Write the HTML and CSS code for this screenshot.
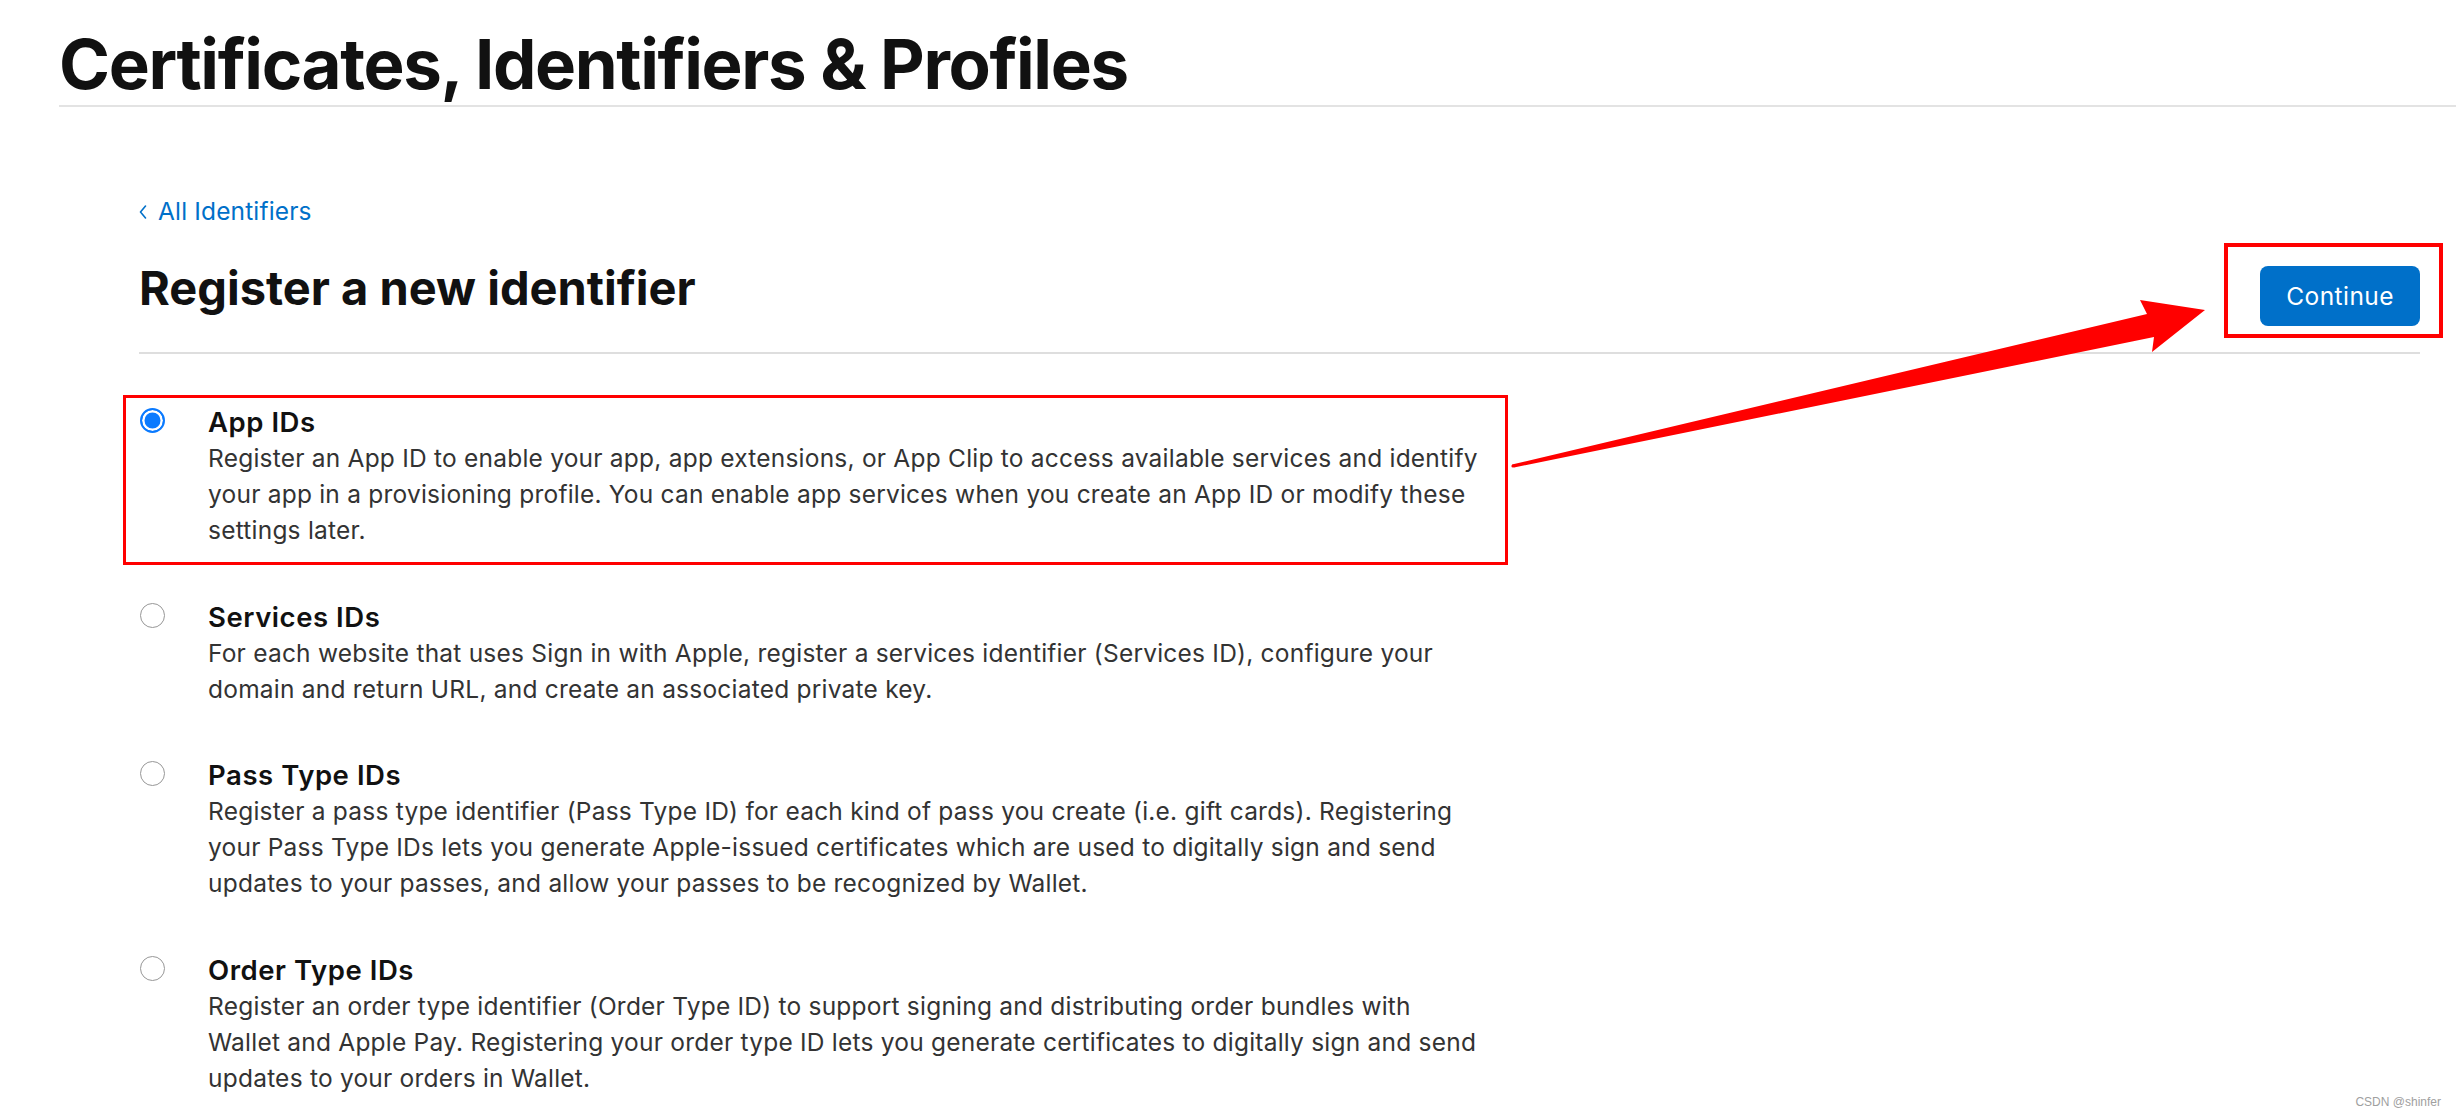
FILE: index.html
```html
<html lang="en">
  <head>
    <meta charset="UTF-8" />
    <meta name="viewport" content="width=device-width, initial-scale=1.0" />
    <title>Register a new identifier</title>
    <link rel="stylesheet" href="styles.css">
  </head>
  <body>
    <header class="top">
      <h1 class="top-title">Certificates, Identifiers &amp; Profiles</h1>
    </header>

    <main class="page">
      <a class="back" href="#">
        <svg class="back-icon" width="8" height="14" viewBox="0 0 8 14"><path d="M6.5 1 L1.5 7 L6.5 13" fill="none" stroke="currentColor" stroke-width="1.6" stroke-linecap="round" stroke-linejoin="round"/></svg>All Identifiers
      </a>

      <div class="head-row">
        <h2 class="head-title">Register a new identifier</h2>
        <button class="btn-continue" type="button">Continue</button>
      </div>

      <form class="options">
        <label class="option">
          <input type="radio" name="idType" value="app" checked />
          <span class="option-text">
            <span class="option-name">App IDs</span>
            <span class="option-desc">Register an App ID to enable your app, app extensions, or App Clip to access available services and identify<br>your app in a provisioning profile. You can enable app services when you create an App ID or modify these<br>settings later.</span>
          </span>
        </label>
        <label class="option">
          <input type="radio" name="idType" value="services" />
          <span class="option-text">
            <span class="option-name">Services IDs</span>
            <span class="option-desc">For each website that uses Sign in with Apple, register a services identifier (Services ID), configure your<br>domain and return URL, and create an associated private key.</span>
          </span>
        </label>
        <label class="option">
          <input type="radio" name="idType" value="pass" />
          <span class="option-text">
            <span class="option-name">Pass Type IDs</span>
            <span class="option-desc">Register a pass type identifier (Pass Type ID) for each kind of pass you create (i.e. gift cards). Registering<br>your Pass Type IDs lets you generate Apple-issued certificates which are used to digitally sign and send<br>updates to your passes, and allow your passes to be recognized by Wallet.</span>
          </span>
        </label>
        <label class="option">
          <input type="radio" name="idType" value="order" />
          <span class="option-text">
            <span class="option-name">Order Type IDs</span>
            <span class="option-desc">Register an order type identifier (Order Type ID) to support signing and distributing order bundles with<br>Wallet and Apple Pay. Registering your order type ID lets you generate certificates to digitally sign and send<br>updates to your orders in Wallet.</span>
          </span>
        </label>
      </form>
    </main>

    <!-- screenshot markup: red boxes and arrow -->
    <svg class="marks" width="2456" height="1118" viewBox="0 0 2456 1118">
      <rect x="124.5" y="396.5" width="1382" height="167" fill="none" stroke="#ff0000" stroke-width="3"/>
      <rect x="2226" y="245" width="215" height="91" fill="none" stroke="#ff0000" stroke-width="4"/>
      <polygon points="1512,464.5 2147,314 2140,300 2205,310 2152,352 2154,337 1514,467.5" fill="#ff0000"/>
      <circle cx="1513" cy="466" r="1.6" fill="#ff0000"/>
    </svg>

    <span class="watermark">CSDN @shinfer</span>
  </body>
</html>
```

FILE: styles.css
```css
body {
  margin: 0;
  position: relative;
  background: #fff;
  color: #111;
  font-family: Inter, "Liberation Sans", sans-serif;
}

.top {
  margin-left: 59px;
  padding-top: 30px;
  padding-bottom: 6px;
  border-bottom: 2px solid #e3e3e3;
}
.top-title {
  margin: 0;
  font-size: 69px;
  line-height: 69px;
  font-weight: 700;
  letter-spacing: -0.02em;
  color: #111;
}

.page {
  padding: 86px 36px 0 139px;
}

.back {
  display: flex;
  align-items: center;
  gap: 11px;
  height: 36px;
  font-size: 24.5px;
  letter-spacing: 0.15px;
  color: #0070c9;
  text-decoration: none;
}
.back-icon {
  margin-top: 2px;
}

.head-row {
  display: flex;
  justify-content: space-between;
  align-items: flex-start;
  margin-top: 31px;
  padding-bottom: 26px;
  border-bottom: 2px solid #dedede;
}
.head-title {
  margin: 0;
  font-size: 47px;
  line-height: 56px;
  font-weight: 700;
  color: #111;
}
.btn-continue {
  margin-top: 6px;
  height: 60px;
  padding: 0 26px;
  border: none;
  border-radius: 8px;
  background: #0070c9;
  color: #fff;
  font-family: inherit;
  font-size: 24.5px;
  letter-spacing: 0.45px;
}

.options {
  display: flex;
  flex-direction: column;
  gap: 50px;
  margin: 0;
  padding-top: 50px;
}
.option {
  display: flex;
  align-items: flex-start;
  gap: 43px;
}
.option input {
  appearance: none;
  box-sizing: border-box;
  flex: none;
  width: 25px;
  height: 25px;
  margin: 4px 0 0 1px;
  border: 1.5px solid #979797;
  border-radius: 50%;
  background: #fff;
}
.option input:checked {
  border: 2px solid #0a7aff;
  background: #0a7aff;
  box-shadow: inset 0 0 0 2.5px #fff;
}
.option-text {
  display: flex;
  flex-direction: column;
}
.option-name {
  font-size: 27.5px;
  line-height: 36px;
  font-weight: 600;
  letter-spacing: 0.55px;
  color: #111;
}
.option-desc {
  font-size: 24.5px;
  line-height: 36.2px;
  letter-spacing: 0.22px;
  color: #333;
}

.marks {
  position: absolute;
  top: 0;
  left: 0;
  pointer-events: none;
}

.watermark {
  position: absolute;
  right: 15px;
  top: 1095px;
  font-family: "Liberation Sans", sans-serif;
  font-size: 12px;
  color: #a0a0a0;
}
```
